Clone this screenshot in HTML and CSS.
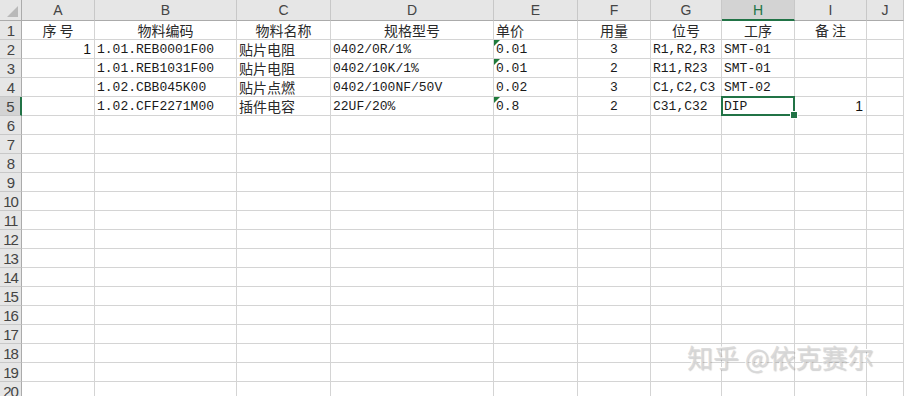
FILE: index.html
```html
<!DOCTYPE html>
<html lang="zh-CN">
<head>
    <meta charset="UTF-8">
    <meta name="viewport" content="width=device-width, initial-scale=1.0">
    <title>物料清单</title>
    <link rel="stylesheet" href="styles.css">
</head>
<body>
    <div id="sheet">
        <!-- column headers -->
        <div class="corner"></div>
        <div class="hd">A</div>
        <div class="hd">B</div>
        <div class="hd">C</div>
        <div class="hd">D</div>
        <div class="hd">E</div>
        <div class="hd">F</div>
        <div class="hd">G</div>
        <div class="hd active">H</div>
        <div class="hd">I</div>
        <div class="hd">J</div>

        <!-- row 1 -->
        <div class="rn">1</div>
        <div class="c zh mid">序 号</div>
        <div class="c zh mid">物料编码</div>
        <div class="c zh mid">物料名称</div>
        <div class="c zh mid">规格型号</div>
        <div class="c zh">单价</div>
        <div class="c zh mid">用量</div>
        <div class="c zh mid">位号</div>
        <div class="c zh mid">工序</div>
        <div class="c zh mid">备 注</div>
        <div class="c"></div>

        <!-- row 2 -->
        <div class="rn">2</div>
        <div class="c num">1</div>
        <div class="c mono">1.01.REB0001F00</div>
        <div class="c zh">贴片电阻</div>
        <div class="c mono">0402/0R/1%</div>
        <div class="c mono tri">0.01</div>
        <div class="c mono mid">3</div>
        <div class="c mono">R1,R2,R3</div>
        <div class="c mono">SMT-01</div>
        <div class="c"></div>
        <div class="c"></div>

        <!-- row 3 -->
        <div class="rn">3</div>
        <div class="c"></div>
        <div class="c mono">1.01.REB1031F00</div>
        <div class="c zh">贴片电阻</div>
        <div class="c mono">0402/10K/1%</div>
        <div class="c mono tri">0.01</div>
        <div class="c mono mid">2</div>
        <div class="c mono">R11,R23</div>
        <div class="c mono">SMT-01</div>
        <div class="c"></div>
        <div class="c"></div>

        <!-- row 4 -->
        <div class="rn">4</div>
        <div class="c"></div>
        <div class="c mono">1.02.CBB045K00</div>
        <div class="c zh">贴片点燃</div>
        <div class="c mono">0402/100NF/50V</div>
        <div class="c mono">0.02</div>
        <div class="c mono mid">3</div>
        <div class="c mono">C1,C2,C3</div>
        <div class="c mono">SMT-02</div>
        <div class="c"></div>
        <div class="c"></div>

        <!-- row 5 -->
        <div class="rn active">5</div>
        <div class="c"></div>
        <div class="c mono">1.02.CFF2271M00</div>
        <div class="c zh">插件电容</div>
        <div class="c mono">22UF/20%</div>
        <div class="c mono tri">0.8</div>
        <div class="c mono mid">2</div>
        <div class="c mono">C31,C32</div>
        <div class="c mono sel">DIP</div>
        <div class="c num">1</div>
        <div class="c"></div>
    </div>

    <div class="mark">知乎 @依克赛尔</div>

    <script>
        /* empty rows 6 - 20 */
        function makeRows(){
            var clutter = "";
            for (var r = 6; r <= 20; r++) {
                clutter += `<div class="rn">${r}</div>`;
                for (var i = 0; i < 10; i++) {
                    clutter += `<div class="c"></div>`;
                }
            }
            document.querySelector("#sheet").insertAdjacentHTML("beforeend", clutter);
        }
        makeRows();
    </script>
</body>
</html>
```

FILE: styles.css
```css
* {
    margin: 0;
    padding: 0;
    box-sizing: border-box;
}
html,body {
    width: 100%;
    height: 100%;
    overflow: hidden;
    background-color: #fff;
}
body {
    position: relative;
    font-family: "Liberation Mono", "Noto Sans CJK SC", monospace;
    color: #111;
}
#sheet {
    display: grid;
    grid-template-columns: 22px 73px 142px 94px 163px 84px 73px 71px 73px 72px 1fr;
    grid-template-rows: 21px;
    grid-auto-rows: 19px;
}
.corner {
    position: relative;
    background-color: #e6e6e6;
    border-right: 1px solid #ababab;
    border-bottom: 1px solid #ababab;
}
.corner::after {
    content: "";
    position: absolute;
    right: 3px;
    bottom: 3px;
    border-left: 11px solid transparent;
    border-bottom: 11px solid #b9b9b9;
}
.hd {
    background-color: #e6e6e6;
    border-right: 1px solid #c8c8c8;
    border-bottom: 1px solid #ababab;
    text-align: center;
    font-family: "Liberation Sans", sans-serif;
    font-size: 14px;
    line-height: 21px;
    color: #444;
}
.hd.active {
    background-color: #d3d3d3;
    border-bottom: 2px solid #217346;
    color: #217346;
}
.rn {
    background-color: #e6e6e6;
    border-right: 1px solid #ababab;
    border-bottom: 1px solid #c8c8c8;
    text-align: center;
    font-family: "Liberation Sans", sans-serif;
    font-size: 15px;
    letter-spacing: -1px;
    line-height: 19px;
    color: #444;
}
.rn.active {
    background-color: #d3d3d3;
    border-right: 2px solid #217346;
}
.c {
    position: relative;
    border-right: 1px solid #d4d4d4;
    border-bottom: 1px solid #d4d4d4;
    padding: 0 2px;
    font-size: 13px;
    line-height: 19px;
    white-space: nowrap;
}
.zh {
    font-family: "Noto Sans CJK SC", sans-serif;
    font-size: 14px;
    line-height: 18px;
    color: #2a2a2a;
}
.mono {
    font-family: "Liberation Mono", "Noto Sans CJK SC", monospace;
    color: #1a1a1a;
}
.mid {
    text-align: center;
}
.num {
    text-align: right;
    padding-right: 3px;
    font-family: "Liberation Sans", sans-serif;
    font-size: 14px;
}
.tri::before {
    content: "";
    position: absolute;
    left: 0;
    top: 0;
    border-top: 6px solid #1f7a3a;
    border-right: 6px solid transparent;
}
.sel::after {
    content: "";
    position: absolute;
    left: -1px;
    top: -1px;
    right: -1px;
    bottom: -1px;
    border: 2px solid #217346;
}
.sel::before {
    content: "";
    position: absolute;
    right: -4px;
    bottom: -4px;
    width: 6px;
    height: 6px;
    background-color: #217346;
    border: 1px solid #fff;
    z-index: 1;
}
.mark {
    position: absolute;
    left: 687px;
    top: 339px;
    font-family: "Noto Sans CJK SC", sans-serif;
    font-size: 26px;
    line-height: 36px;
    color: rgba(215, 215, 215, 0.85);
    text-shadow: 1px 1px 1px rgba(0, 0, 0, 0.18), -1px -1px 0 #fff;
    white-space: nowrap;
}
```
